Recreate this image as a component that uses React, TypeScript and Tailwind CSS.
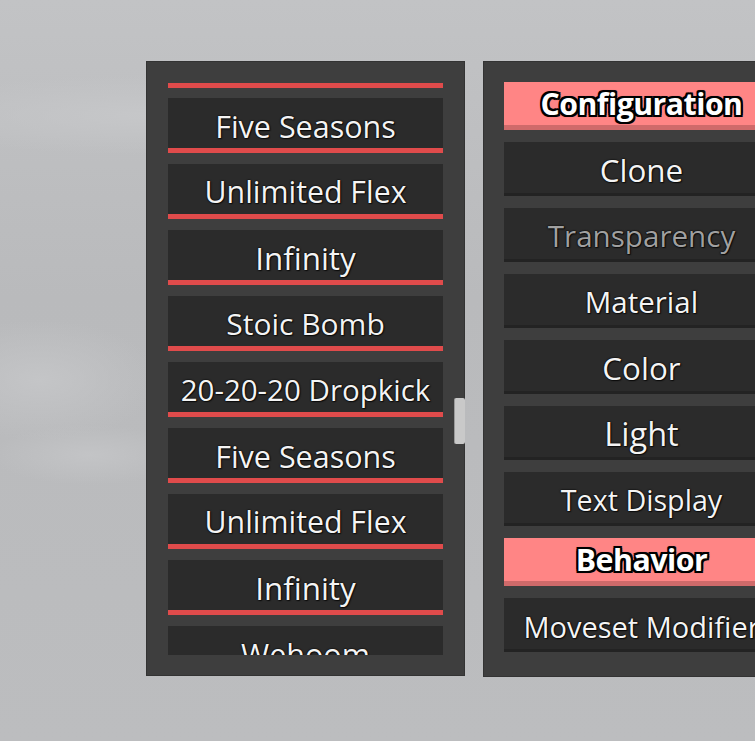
import React from "react";

type LeftItem = { label: string; size: string };

const leftItems: LeftItem[] = [
  { label: "Five Seasons", size: "text-[30.5px]" },
  { label: "Unlimited Flex", size: "text-[30.3px]" },
  { label: "Infinity", size: "text-[31.4px]" },
  { label: "Stoic Bomb", size: "text-[30px]" },
  { label: "20-20-20 Dropkick", size: "text-[29.5px]" },
  { label: "Five Seasons", size: "text-[30.5px]" },
  { label: "Unlimited Flex", size: "text-[30.3px]" },
  { label: "Infinity", size: "text-[31.4px]" },
  { label: "Wehoom", size: "text-[30.5px]" },
];

type RightItem = { label: string; header?: boolean; dim?: boolean; size: string };

const rightItems: RightItem[] = [
  { label: "Configuration", header: true, size: "text-[30.2px]" },
  { label: "Clone", size: "text-[31.4px]" },
  { label: "Transparency", dim: true, size: "text-[29.6px]" },
  { label: "Material", size: "text-[29.5px]" },
  { label: "Color", size: "text-[31.4px]" },
  { label: "Light", size: "text-[32.5px]" },
  { label: "Text Display", size: "text-[28.7px]" },
  { label: "Behavior", header: true, size: "text-[30.3px]" },
  { label: "Moveset Modifier", size: "text-[29px]" },
];

const font = "font-['Open_Sans','Noto_Sans','Liberation_Sans',sans-serif]";

const thinStroke = "[text-shadow:0_0_2px_#000,0_0_1px_#000,1px_1px_1px_#111]";
const thickStroke =
  "[text-shadow:2px_0_0_#000,-2px_0_0_#000,0_2px_0_#000,0_-2px_0_#000,2px_2px_0_#000,-2px_-2px_0_#000,2px_-2px_0_#000,-2px_2px_0_#000,0_0_3px_#000]";

export default function App() {
  return (
    <div
      className={`w-[755px] h-[741px] overflow-hidden relative bg-[#bbbcbe] bg-[radial-gradient(ellipse_260px_40px_at_150px_115px,#c6c7c9,transparent),radial-gradient(ellipse_120px_60px_at_40px_380px,#c4c5c7,transparent),radial-gradient(ellipse_100px_30px_at_90px_455px,#c3c4c6,transparent),linear-gradient(to_bottom,#c2c3c5,#b9babc_40%,#bcbdbf)] ${font}`}
    >
      <div className="flex gap-[18px] pt-[61px] pl-[146px]">
        {/* Left panel */}
        <div className="relative w-[319px] h-[615px] shrink-0 bg-[#3e3e3e] border border-[#333333] px-[21px] pt-[21px]">
          <div className="h-[572px] overflow-hidden flex flex-col">
            <div className="h-[5px] shrink-0 bg-[#e04b4b]" />
            {leftItems.map((t, i) => (
              <div
                key={i}
                className={`shrink-0 flex flex-col ${i === 0 ? "mt-[10px]" : "mt-[11px]"}`}
              >
                <div
                  className={`h-[50px] bg-[#2b2b2b] flex items-center justify-center pt-[6px] text-[#f4f4f4] font-medium whitespace-nowrap leading-none ${t.size} ${thinStroke}`}
                >
                  {t.label}
                </div>
                <div className="h-[5px] bg-[#e04b4b]" />
              </div>
            ))}
          </div>
          {/* scrollbar */}
          <div className="absolute left-[307px] top-[336px] w-[11px] h-[46px] bg-[#c9c9c9] border-l border-[#9a9a9a] rounded-[2px]" />
        </div>

        {/* Right panel */}
        <div className="w-[319px] h-[616px] shrink-0 bg-[#3e3e3e] border border-[#333333] pl-[20px] pt-[20px] flex flex-col gap-[12px]">
          {rightItems.map((it, i) =>
            it.header ? (
              <div
                key={i}
                className={`w-[275px] h-[48px] shrink-0 bg-[#ff8585] border-b-[5px] border-[#cf6a6a] flex items-center justify-center pt-[1px] font-bold text-white whitespace-nowrap leading-none tracking-[-0.5px] ${it.size} ${thickStroke}`}
              >
                {it.label}
              </div>
            ) : (
              <div
                key={i}
                className={`w-[275px] h-[54px] shrink-0 bg-[#2b2b2b] border-b-[3px] border-[#232323] flex items-center justify-center pt-[5px] font-medium whitespace-nowrap overflow-hidden leading-none ${it.size} ${thinStroke} ${
                  it.dim ? "text-[#a0a0a0]" : "text-[#f4f4f4]"
                }`}
              >
                {it.label}
              </div>
            )
          )}
        </div>
      </div>
    </div>
  );
}
